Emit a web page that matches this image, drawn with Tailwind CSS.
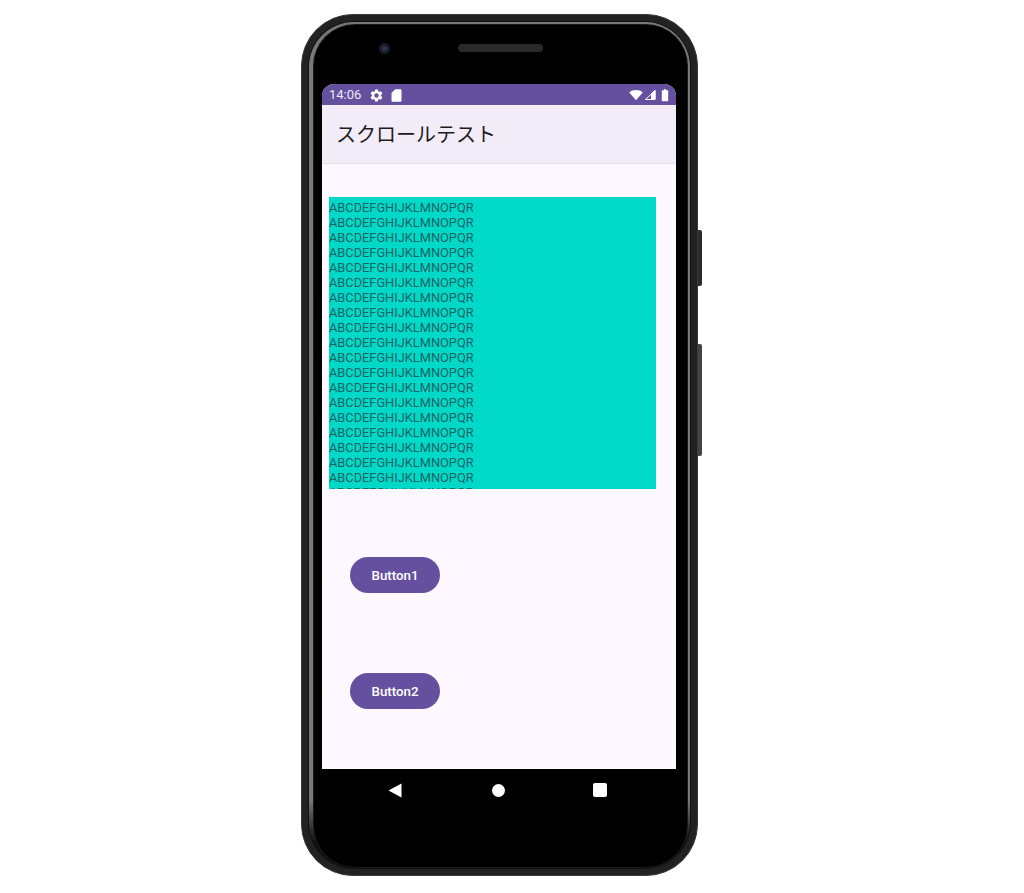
<!DOCTYPE html>
<html lang="ja">
<head>
    <meta charset="UTF-8">
    <meta name="viewport" content="width=device-width, initial-scale=1.0">
    <title>スクロールテスト</title>
    <script src="https://cdn.jsdelivr.net/npm/@tailwindcss/browser@4"></script>
</head>
<body class="h-screen bg-white overflow-hidden font-['Roboto',sans-serif]">

    <div class="pt-[14px] pl-[301px]">
        <!-- Phone body -->
        <div class="relative w-[397px] h-[862px]">
            <!-- Side buttons -->
            <div class="absolute left-[396px] top-[216px] w-[5px] h-[56px] bg-[#2c2c2c] rounded-r-[2px]"></div>
            <div class="absolute left-[396px] top-[330px] w-[5px] h-[112px] bg-[#444444] rounded-r-[2px]"></div>

            <div class="relative w-full h-full rounded-[52px] bg-[#222222] border border-[#3a3a3a] p-[6px]">
                <div class="w-full h-full rounded-[46px] bg-[#111111] p-[1px]">
                    <!-- Light inner ring, fades out towards the bottom -->
                    <div class="w-full h-full rounded-[45px] bg-linear-to-b from-[#787878] from-92% to-[#111111] to-97% pt-[2px] pl-[4px] pr-[2px]">
                        <div class="w-full h-full rounded-[42px] bg-[#1a1a1a] p-[1px]">
                            <div class="w-full h-full rounded-[41px] bg-black flex flex-col items-start pl-[8px] overflow-hidden">

                                <!-- Camera and speaker -->
                                <div class="w-[354px] h-[59px] shrink-0 relative">
                                    <div class="absolute left-[57px] top-[18px] w-[11px] h-[11px] rounded-full bg-[#2a3550] border-[3px] border-[#191d27]"></div>
                                    <div class="absolute left-[136px] top-[19px] w-[85px] h-[8px] rounded-full bg-[#2a2a2a]"></div>
                                </div>

                                <!-- Screen -->
                                <div class="w-[354px] h-[685px] shrink-0 bg-[#fdf7ff] rounded-t-[12px] overflow-hidden flex flex-col">
                                    <!-- Status bar -->
                                    <div class="h-[21px] bg-[#65509f] flex items-center pl-[7px] pr-[5px] pt-[1px] text-white shrink-0">
                                        <span class="text-[13px] text-[#ece8f5]">14:06</span>
                                        <svg class="w-[15px] h-[15px] ml-[8px]" viewBox="0 0 24 24" fill="#fff"><path d="M19.14 12.94c.04-.3.06-.61.06-.94s-.02-.64-.07-.94l2.03-1.58a.49.49 0 0 0 .12-.61l-1.92-3.32a.49.49 0 0 0-.59-.22l-2.39.96a7 7 0 0 0-1.62-.94l-.36-2.54a.48.48 0 0 0-.48-.41h-3.84a.47.47 0 0 0-.47.41l-.36 2.54c-.59.24-1.13.57-1.62.94l-2.39-.96a.48.48 0 0 0-.59.22L2.74 8.87a.47.47 0 0 0 .12.61l2.03 1.58c-.05.3-.09.63-.09.94s.02.64.07.94l-2.03 1.58a.49.49 0 0 0-.12.61l1.92 3.32c.12.22.37.29.59.22l2.39-.96c.5.38 1.03.7 1.62.94l.36 2.54c.05.24.24.41.48.41h3.84c.24 0 .44-.17.47-.41l.36-2.54c.59-.24 1.13-.56 1.62-.94l2.39.96c.22.08.47 0 .59-.22l1.92-3.32a.47.47 0 0 0-.12-.61l-2.01-1.58zM12 15.6A3.6 3.6 0 1 1 12 8.4a3.6 3.6 0 0 1 0 7.2z"/></svg>
                                        <svg class="w-[15px] h-[15px] ml-[5px]" viewBox="0 0 24 24" fill="#fff"><path d="M18 2h-8L4 8v12c0 1.1.9 2 2 2h12c1.1 0 2-.9 2-2V4c0-1.1-.9-2-2-2z"/></svg>
                                        <div class="flex-1"></div>
                                        <svg class="w-[14px] h-[14px]" viewBox="0 0 24 24" fill="#fff"><path d="M12 21 0.5 7.500C3.500 5 7.500 3.500 12 3.500S20.500 5 23.500 7.500z"/></svg>
                                        <svg class="w-[12px] h-[12px] ml-[1px]" viewBox="0 0 24 24" fill="none" stroke="#fff" stroke-width="2"><path d="M22 3v18H3z"/><path d="M15 10v11h7V3z" fill="#fff"/></svg>
                                        <svg class="w-[12px] h-[14px] ml-[3px]" viewBox="0 0 12 24" fill="#fff"><path d="M4 2h4v2h2.500c.6 0 1 .4 1 1v16.500c0 .6-.4 1-1 1h-9c-.6 0-1-.4-1-1V5c0-.6.4-1 1-1H4z"/></svg>
                                    </div>

                                    <!-- App bar -->
                                    <div class="h-[58px] bg-[#f1ecf8] shadow-[0_1px_1px_rgba(0,0,0,0.08)] flex items-center pl-[14px] shrink-0">
                                        <h1 class="text-[20px] text-[#1d1b20] font-['Noto_Sans_CJK_JP','Noto_Sans',sans-serif]">スクロールテスト</h1>
                                    </div>

                                    <!-- Scrollable text box -->
                                    <div class="w-[327px] h-[292px] mt-[34px] ml-[7px] bg-[#00d9c8] overflow-hidden pt-[3px] shrink-0 text-[12.8px] leading-[15px] text-[#1d6565] whitespace-nowrap">
                                        <p>ABCDEFGHIJKLMNOPQR</p>
                                        <p>ABCDEFGHIJKLMNOPQR</p>
                                        <p>ABCDEFGHIJKLMNOPQR</p>
                                        <p>ABCDEFGHIJKLMNOPQR</p>
                                        <p>ABCDEFGHIJKLMNOPQR</p>
                                        <p>ABCDEFGHIJKLMNOPQR</p>
                                        <p>ABCDEFGHIJKLMNOPQR</p>
                                        <p>ABCDEFGHIJKLMNOPQR</p>
                                        <p>ABCDEFGHIJKLMNOPQR</p>
                                        <p>ABCDEFGHIJKLMNOPQR</p>
                                        <p>ABCDEFGHIJKLMNOPQR</p>
                                        <p>ABCDEFGHIJKLMNOPQR</p>
                                        <p>ABCDEFGHIJKLMNOPQR</p>
                                        <p>ABCDEFGHIJKLMNOPQR</p>
                                        <p>ABCDEFGHIJKLMNOPQR</p>
                                        <p>ABCDEFGHIJKLMNOPQR</p>
                                        <p>ABCDEFGHIJKLMNOPQR</p>
                                        <p>ABCDEFGHIJKLMNOPQR</p>
                                        <p>ABCDEFGHIJKLMNOPQR</p>
                                        <p>ABCDEFGHIJKLMNOPQR</p>
                                    </div>

                                    <!-- Buttons -->
                                    <button class="w-[90px] h-[36px] mt-[68px] ml-[28px] pt-[2px] rounded-full bg-[#65509f] text-white text-[13.3px] font-medium shrink-0">Button1</button>
                                    <button class="w-[90px] h-[36px] mt-[80px] ml-[28px] pt-[1px] rounded-full bg-[#65509f] text-white text-[13.3px] font-medium shrink-0">Button2</button>
                                </div>

                                <!-- Navigation bar -->
                                <div class="w-[354px] flex-1 relative">
                                    <svg class="absolute left-[66px] top-[14px] w-[14px] h-[15px]" viewBox="0 0 14 15" fill="#fff"><path d="M13.500 0.500v14L0.500 7.500z"/></svg>
                                    <div class="absolute left-[170px] top-[15px] w-[13px] h-[13px] rounded-full bg-white"></div>
                                    <div class="absolute left-[271px] top-[14px] w-[14px] h-[14px] rounded-[2px] bg-white"></div>
                                </div>
                            </div>
                        </div>
                    </div>
                </div>
            </div>
        </div>
    </div>

</body>
</html>
